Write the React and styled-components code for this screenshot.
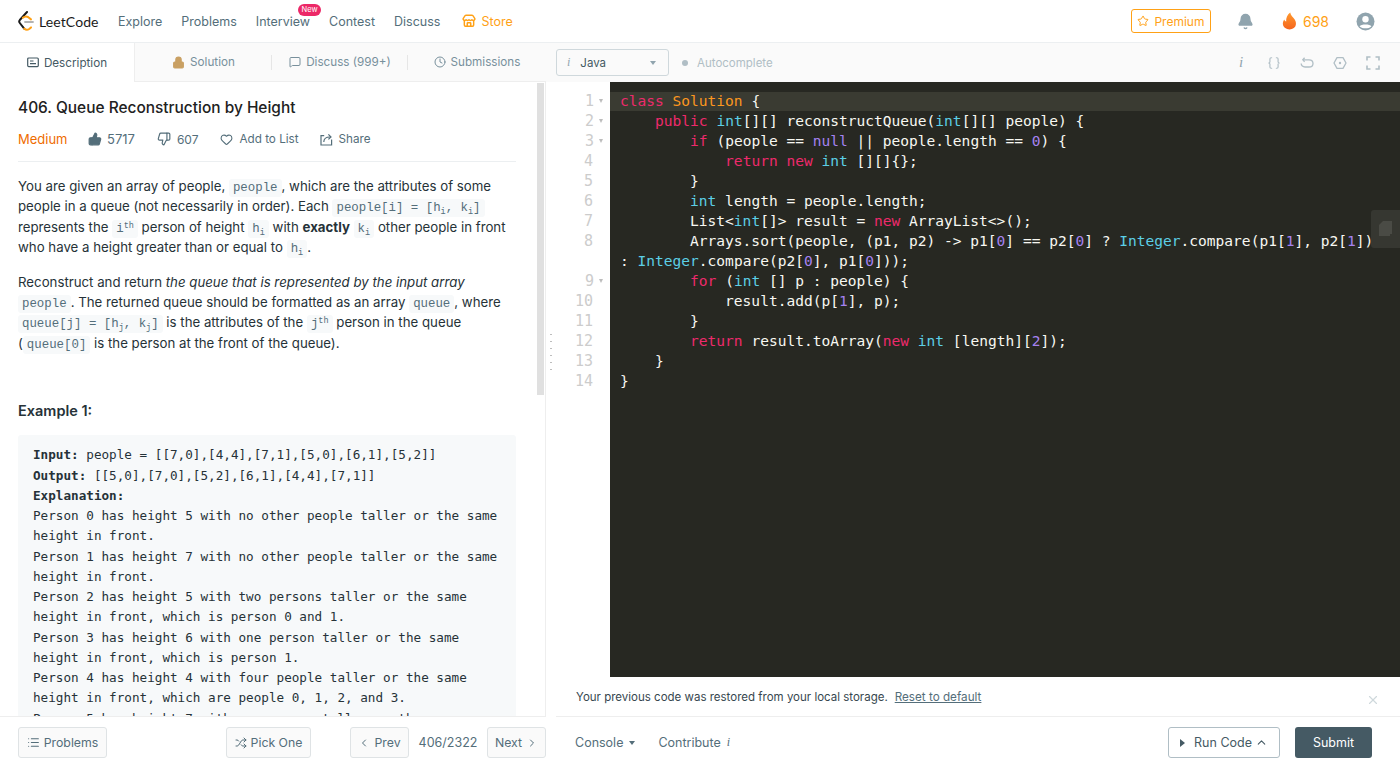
import React from "react"
import styled, { createGlobalStyle } from "styled-components"
import {
  Star,
  ThumbsUp,
  ThumbsDown,
  Heart,
  MessageSquare,
  Clock,
  Lock,
  List,
  Shuffle,
  ChevronLeft,
  ChevronRight,
  ChevronUp,
  Braces,
  Store,
  Bell,
  X,
} from "lucide-react"

const GlobalStyle = createGlobalStyle`
  html, body {
    margin: 0;
    padding: 0;
    height: 100%;
    overflow: hidden;
    background: #fff;
    font-family: Inter, "Noto Sans", sans-serif;
    color: #263238;
  }
  * { box-sizing: border-box; }
`

const Page = styled.div`
  width: 1400px;
  height: 768px;
  display: flex;
  flex-direction: column;
  position: relative;
`

/* top navigation */
const Header = styled.header`
  height: 43px;
  flex: none;
  display: flex;
  align-items: center;
  padding: 0 25px 0 18px;
  border-bottom: 1px solid #eceff1;
`

const LogoLink = styled.div`
  display: flex;
  align-items: center;
  gap: 5px;
  width: 100px;
  font-family: Lato, sans-serif;
  font-size: 14px;
  letter-spacing: 0.1px;
  color: #1a1a1a;
`

const Nav = styled.nav`
  display: flex;
  align-items: center;
  gap: 19px;
`

const NavItem = styled.a`
  position: relative;
  display: flex;
  align-items: center;
  gap: 5px;
  font-size: 12.5px;
  margin-left: ${(p) => (p.$accent ? 3 : 0)}px;
  color: ${(p) => (p.$accent ? "#ffa116" : "#546e7a")};
`

const NewBadge = styled.span`
  position: absolute;
  top: -10px;
  right: -11px;
  width: 23px;
  height: 12px;
  border-radius: 6px;
  background: #ec2867;
  color: #fff;
  font-size: 7.5px;
  line-height: 12px;
  text-align: center;
`

const HeaderRight = styled.div`
  margin-left: auto;
  display: flex;
  align-items: center;
`

const PremiumButton = styled.button`
  width: 80px;
  height: 24px;
  padding: 0;
  display: flex;
  align-items: center;
  justify-content: center;
  gap: 5px;
  background: #fff;
  border: 1px solid #ffa116;
  border-radius: 3px;
  color: #ffa116;
  font: 12px Inter, sans-serif;
  margin-right: 26px;
`

const Coins = styled.div`
  display: flex;
  align-items: center;
  gap: 6px;
  margin: 0 27px 0 28px;
  font-size: 14px;
  color: #ffa116;
`

/* the two columns */
const Main = styled.div`
  flex: 1;
  min-height: 0;
  display: flex;
`

const LeftColumn = styled.section`
  width: 546px;
  flex: none;
  display: flex;
  flex-direction: column;
  position: relative;
`

const Tabs = styled.div`
  height: 39px;
  flex: none;
  display: grid;
  grid-template-columns: 135px 137px 136px 138px;
  background: #fafafa;
`

const Tab = styled.div`
  display: flex;
  align-items: center;
  justify-content: center;
  gap: 5px;
  font-size: 11.7px;
  color: ${(p) => (p.$active ? "#455a64" : "#78909c")};
  background: ${(p) => (p.$active ? "#fff" : "transparent")};
  border-bottom: ${(p) => (p.$active ? "none" : "1px solid #eeeeee")};
  border-right: ${(p) => (p.$active ? "1px solid #eeeeee" : "none")};
`

const Separated = styled(Tab)`
  position: relative;
  &::after {
    content: "";
    position: absolute;
    right: 0;
    top: 12px;
    height: 15px;
    width: 1px;
    background: #e6e6e6;
  }
`

const Description = styled.div`
  flex: 1;
  min-height: 0;
  overflow: hidden;
  padding: 16px 29px 0 18px;
  border-right: 1px solid #eeeeee;
  border-bottom: 1px solid #eeeeee;
`

const Title = styled.h1`
  margin: 0;
  font-size: 15.45px;
  line-height: 20px;
  font-weight: 500;
  color: #212121;
`

const Meta = styled.div`
  display: flex;
  align-items: center;
  height: 20px;
  margin-top: 11px;
  color: #546e7a;
`

const Difficulty = styled.span`
  color: #ef6c00;
  font-size: 13px;
  width: 70px;
  flex: none;
`

const MetaItem = styled.span`
  display: flex;
  align-items: center;
  gap: ${(p) => p.$inner || 6}px;
  font-size: ${(p) => p.$size || 11.7}px;
  margin-right: ${(p) => p.$gap || 0}px;
`

const Rule = styled.hr`
  margin: 12px 0 14px;
  border: 0;
  border-top: 1px solid #eceff1;
`

const Para = styled.p`
  margin: 0 0 14px;
  font-size: 13.25px;
  line-height: 20.4px;
  color: #263238;
`

const Code = styled.code`
  font-family: "Liberation Mono", monospace;
  font-size: 12.4px;
  line-height: 1;
  color: #546e7a;
  background: #f7f9fa;
  border-radius: 3px;
  padding: 2px 4px;
  sub, sup {
    font-size: 8.5px;
    line-height: 0;
    vertical-align: baseline;
    position: relative;
  }
  sub { top: 3px; }
  sup { top: -4px; }
`

const ExampleTitle = styled.div`
  margin-top: 48px;
  font-size: 14.5px;
  line-height: 20px;
  font-weight: 600;
  color: #263238;
`

const ExampleBlock = styled.pre`
  margin: 14px 0 0;
  padding: 10px 15px;
  background: #f7f9fa;
  border-radius: 3px;
  font-family: "DejaVu Sans Mono", monospace;
  font-size: 12.65px;
  line-height: 20.25px;
  color: #263238;
  b { font-weight: 700; }
`

const ScrollThumb = styled.div`
  position: absolute;
  top: 40px;
  left: 537px;
  width: 7px;
  height: 312px;
  background: #e0e0e0;
`

const Footer = styled.footer`
  height: 51px;
  flex: none;
  display: flex;
  align-items: center;
`

const LeftFooter = styled(Footer)`
  padding: 0 0 0 18px;
`

const PagerButton = styled.button`
  height: 31px;
  padding: 0;
  width: ${(p) => p.$w}px;
  margin-left: ${(p) => p.$ml || 0}px;
  display: flex;
  align-items: center;
  justify-content: center;
  gap: 4px;
  font: 12.3px Inter, sans-serif;
  color: #546e7a;
  background: #fafafa;
  border: 1px solid #dfe3e5;
  border-radius: 3px;
`

const PageCount = styled.span`
  width: 78px;
  text-align: center;
  font-size: 12.5px;
  color: #546e7a;
`

const RightColumn = styled.section`
  flex: 1;
  min-width: 0;
  padding-left: 10px;
  display: flex;
  flex-direction: column;
  position: relative;
`

const ResizeDots = styled.div`
  position: absolute;
  left: 4px;
  top: 288px;
  width: 2px;
  height: 42px;
  background-image: radial-gradient(circle, #bdbdbd 1px, transparent 1px);
  background-size: 2px 7px;
`

const EditorBar = styled.div`
  height: 39px;
  flex: none;
  display: flex;
  align-items: center;
  background: #fafafa;
  margin-left: -10px;
  padding-left: 10px;
`

const LangSelect = styled.div`
  width: 113px;
  height: 27px;
  display: flex;
  align-items: center;
  padding: 0 12px 0 10px;
  background: #fafafa;
  border: 1px solid #cfd8dc;
  border-radius: 3px;
  font-size: 11.5px;
  color: #455a64;
`

const InfoMark = styled.i`
  font-family: "Liberation Serif", serif;
  font-size: ${(p) => p.$size || 12}px;
  color: ${(p) => p.$color || "#90a4ae"};
`

const BarInfo = styled(InfoMark)`
  width: 14px;
  text-align: center;
`

const LangName = styled.span`
  margin-left: 10px;
  flex: 1;
`

const Caret = styled.span`
  width: 0;
  height: 0;
  border-left: 3.5px solid transparent;
  border-right: 3.5px solid transparent;
  border-top: 4px solid ${(p) => p.$color || "#90a4ae"};
`

const Toggle = styled.div`
  display: flex;
  align-items: center;
  gap: 9px;
  margin-left: 13px;
  font-size: 11.5px;
  color: #b0bec5;
  &::before {
    content: "";
    width: 6px;
    height: 6px;
    border-radius: 50%;
    background: #b0bec5;
  }
`

const BarIcons = styled.div`
  margin-left: auto;
  padding-right: 20px;
  display: flex;
  align-items: center;
  gap: 19px;
  color: #b0bec5;
`

const Editor = styled.div`
  height: 595px;
  flex: none;
  display: flex;
  position: relative;
`

const Gutter = styled.div`
  width: 54px;
  flex: none;
  padding-top: 9px;
  background: #fff;
`

const GutterLine = styled.div`
  height: ${(p) => (p.$tall ? 40 : 20)}px;
  display: flex;
  justify-content: flex-end;
  padding-right: ${(p) => (p.$fold ? 7 : 17)}px;
  gap: 5px;
  font-family: "DejaVu Sans Mono", monospace;
  font-size: 15px;
  line-height: 20px;
  color: #cccccc;
`

const FoldMark = styled.span`
  margin-top: 8px;
  width: 0;
  height: 0;
  border-left: 2.5px solid transparent;
  border-right: 2.5px solid transparent;
  border-top: 4px solid #bdbdbd;
`

const CodePane = styled.pre`
  flex: 1;
  margin: 0;
  padding: 9px 0 0 10px;
  background: #272822;
  font-family: "DejaVu Sans Mono", monospace;
  font-size: 14.55px;
  line-height: 20px;
  color: #f8f8f2;
  position: relative;
  overflow: hidden;
`

const ActiveLine = styled.div`
  position: absolute;
  left: 0;
  right: 0;
  top: 10px;
  height: 19px;
  background: #3a3b32;
`

const CodeText = styled.div`
  position: relative;
`

const Tok = styled.span`
  color: ${(p) => ({ kw: "#ee2a6c", ty: "#5ccfe6", cl: "#fd971f", num: "#a582f0" }[p.$k])};
`

const CopyTab = styled.div`
  position: absolute;
  right: 0;
  top: 128px;
  width: 29px;
  height: 38px;
  display: flex;
  align-items: center;
  justify-content: center;
  background: #363731;
  border-radius: 3px 0 0 3px;
  color: #4a4b45;
`

const Notice = styled.div`
  height: 40px;
  flex: none;
  display: flex;
  align-items: center;
  padding: 0 20px;
  font-size: 11.5px;
  color: #37474f;
  border-bottom: 1px solid #eeeeee;
  gap: 7px;
`

const NoticeLink = styled.a`
  color: #546e7a;
  font-size: 11.7px;
  text-decoration: underline;
`

const NoticeClose = styled.span`
  margin-left: auto;
  padding-top: 6px;
  color: #cfd8dc;
  display: flex;
`

const RightFooter = styled(Footer)`
  padding: 0 28px 0 19px;
`

const ConsoleLink = styled.span`
  display: flex;
  align-items: center;
  gap: 6px;
  font-size: 12.5px;
  color: #546e7a;
  margin-right: ${(p) => p.$gap || 0}px;
`

const RunButton = styled.button`
  margin-left: auto;
  width: 112px;
  height: 31px;
  padding: 0;
  display: flex;
  align-items: center;
  justify-content: center;
  gap: 3px;
  background: #fff;
  border: 1px solid #b0bec5;
  border-radius: 3px;
  font: 12.5px Inter, sans-serif;
  color: #455a64;
`

const PlayMark = styled.span`
  width: 0;
  height: 0;
  margin-right: 6px;
  border-top: 4px solid transparent;
  border-bottom: 4px solid transparent;
  border-left: 5px solid #455a64;
`

const SubmitButton = styled.button`
  margin-left: 15px;
  width: 77px;
  height: 31px;
  padding: 0;
  border: 0;
  border-radius: 3px;
  background: #455a64;
  color: #fff;
  font: 12.5px Inter, sans-serif;
`

const Logo = () => (
  <svg width="16" height="21" viewBox="0 0 16 21" fill="none" strokeLinecap="round" strokeLinejoin="round">
    <path d="M9 1 L1.8 9 Q0.6 10.5 1.8 12 L6.2 17.6" stroke="#1a1a1a" strokeWidth="2" />
    <path d="M6.2 17.6 Q8.6 19.8 11.2 18 L13 16.4" stroke="#ffa116" strokeWidth="2" />
    <path d="M4.8 6.8 Q7.4 4.6 10 6 L13 8.4" stroke="#ffa116" strokeWidth="2" />
    <path d="M7 11 H15" stroke="#b3b3b3" strokeWidth="1.8" />
  </svg>
)

const Flame = () => (
  <svg width="15" height="18" viewBox="0 0 15 18">
    <defs>
      <linearGradient id="flame" x1="0" y1="0" x2="0" y2="1">
        <stop offset="0" stopColor="#ff9a2e" />
        <stop offset="1" stopColor="#f5641e" />
      </linearGradient>
    </defs>
    <path
      d="M8.2 0.5 C8.6 3.6 11 4.8 12.7 7.4 C14.6 10.4 14.4 14 11.8 16.1 C9.6 17.9 5.4 17.9 3.2 16.1 C0.4 13.8 0.2 10.4 2.2 7.4 C2.6 8.4 3.2 9.2 4.2 9.6 C3.8 6 5.4 2.6 8.2 0.5 Z"
      fill="url(#flame)"
    />
  </svg>
)

const Avatar = () => (
  <svg width="19" height="19" viewBox="0 0 19 19">
    <circle cx="9.5" cy="9.5" r="9" fill="#90a4ae" />
    <circle cx="9.5" cy="7.3" r="3.2" fill="#fff" />
    <path d="M3.6 14.4 C5 11.8 14 11.8 15.4 14.4 C12.5 17 6.5 17 3.6 14.4 Z" fill="#fff" />
  </svg>
)

const DescIcon = () => (
  <svg width="12" height="11" viewBox="0 0 12 11" fill="none" stroke="currentColor">
    <rect x="0.7" y="1" width="10.6" height="8.6" rx="1" strokeWidth="1.2" />
    <path d="M3 4 H6.5 M3 6.6 H9" strokeWidth="1.1" />
  </svg>
)

const ShareIcon = () => (
  <svg width="13" height="13" viewBox="0 0 13 13" fill="none" stroke="currentColor" strokeWidth="1.2">
    <path d="M4.2 2.6 H1 V12 H11.6 V6.4" />
    <path d="M3.8 9 C3.8 5.6 6 4 10 4" />
    <path d="M8.4 1.4 L11 4 L8.4 6.4" />
  </svg>
)

const UndoIcon = () => (
  <svg width="14" height="14" viewBox="0 0 14 14" fill="none" stroke="currentColor" strokeWidth="1.3">
    <path d="M3.2 3.8 H9 C11.4 3.8 13 5.4 13 7.4 C13 9.6 11.2 11 9 11 H5 C2.8 11 1.2 9.6 1.2 7.6" />
    <path d="M4.6 1.8 L2.8 3.8 L4.6 5.8" />
  </svg>
)

const GearIcon = () => (
  <svg width="14" height="14" viewBox="0 0 14 14" fill="none" stroke="currentColor" strokeWidth="1.3" strokeLinejoin="round">
    <path d="M4 1.6 H10 L13 7 L10 12.4 H4 L1 7 Z" />
    <circle cx="7" cy="7" r="1.2" fill="currentColor" stroke="none" />
  </svg>
)

const FullscreenIcon = () => (
  <svg width="14" height="14" viewBox="0 0 14 14" fill="none" stroke="currentColor" strokeWidth="1.6">
    <path d="M1 4.5 V1 H4.5 M9.5 1 H13 V4.5 M13 9.5 V13 H9.5 M4.5 13 H1 V9.5" />
  </svg>
)

const PageIcon = () => (
  <svg width="13" height="16" viewBox="0 0 13 16" fill="currentColor">
    <path d="M4 0 H13 V13 H11 V15 H0 V4 Z" />
  </svg>
)

const Description406 = () => (
  <Description>
    <Title>406. Queue Reconstruction by Height</Title>
    <Meta>
      <Difficulty>Medium</Difficulty>
      <MetaItem $gap={22} $size={13} $inner={5}>
        <ThumbsUp size={14} fill="#546e7a" stroke="#546e7a" />
        5717
      </MetaItem>
      <MetaItem $gap={22} $size={12}>
        <ThumbsDown size={14} />
        607
      </MetaItem>
      <MetaItem $gap={21}>
        <Heart size={13} />
        Add to List
      </MetaItem>
      <MetaItem>
        <ShareIcon />
        Share
      </MetaItem>
    </Meta>
    <Rule />
    <Para>
      You are given an array of people, <Code>people</Code>, which are the attributes of some people in a queue
      (not necessarily in order). Each <Code>people[i] = [h<sub>i</sub>, k<sub>i</sub>]</Code> represents the{" "}
      <Code>i<sup>th</sup></Code> person of height <Code>h<sub>i</sub></Code> with <b>exactly</b>{" "}
      <Code>k<sub>i</sub></Code> other people in front who have a height greater than or equal to{" "}
      <Code>h<sub>i</sub></Code>.
    </Para>
    <Para>
      Reconstruct and return <i>the queue that is represented by the input array</i> <Code>people</Code>. The
      returned queue should be formatted as an array <Code>queue</Code>, where{" "}
      <Code>queue[j] = [h<sub>j</sub>, k<sub>j</sub>]</Code> is the attributes of the <Code>j<sup>th</sup></Code>{" "}
      person in the queue (<Code>queue[0]</Code> is the person at the front of the queue).
    </Para>
    <ExampleTitle>Example 1:</ExampleTitle>
    <ExampleBlock>
      <b>Input:</b> people = [[7,0],[4,4],[7,1],[5,0],[6,1],[5,2]]{"\n"}
      <b>Output:</b> [[5,0],[7,0],[5,2],[6,1],[4,4],[7,1]]{"\n"}
      <b>Explanation:</b>{"\n"}
      {`Person 0 has height 5 with no other people taller or the same
height in front.
Person 1 has height 7 with no other people taller or the same
height in front.
Person 2 has height 5 with two persons taller or the same
height in front, which is person 0 and 1.
Person 3 has height 6 with one person taller or the same
height in front, which is person 1.
Person 4 has height 4 with four people taller or the same
height in front, which are people 0, 1, 2, and 3.
Person 5 has height 7 with one person taller or the same`}
    </ExampleBlock>
  </Description>
)

const foldLines = [1, 2, 3, 9]
const lineNumbers = [1, 2, 3, 4, 5, 6, 7, 8, 9, 10, 11, 12, 13, 14]

const CodeBody = () => (
  <CodeText>
    <Tok $k="kw">class</Tok> <Tok $k="cl">Solution</Tok> {"{\n"}
    {"    "}<Tok $k="kw">public</Tok> <Tok $k="ty">int</Tok>{"[][] reconstructQueue("}<Tok $k="ty">int</Tok>{"[][] people) {\n"}
    {"        "}<Tok $k="kw">if</Tok> {"(people == "}<Tok $k="num">null</Tok>{" || people.length == "}<Tok $k="num">0</Tok>{") {\n"}
    {"            "}<Tok $k="kw">return</Tok> <Tok $k="kw">new</Tok> <Tok $k="ty">int</Tok>{" [][]{};\n"}
    {"        }\n"}
    {"        "}<Tok $k="ty">int</Tok>{" length = people.length;\n"}
    {"        List<"}<Tok $k="ty">int</Tok>{"[]> result = "}<Tok $k="kw">new</Tok>{" ArrayList<>();\n"}
    {"        Arrays.sort(people, (p1, p2) -> p1["}<Tok $k="num">0</Tok>{"] == p2["}<Tok $k="num">0</Tok>{"] ? "}<Tok $k="ty">Integer</Tok>{".compare(p1["}<Tok $k="num">1</Tok>{"], p2["}<Tok $k="num">1</Tok>{"])\n"}
    {": "}<Tok $k="ty">Integer</Tok>{".compare(p2["}<Tok $k="num">0</Tok>{"], p1["}<Tok $k="num">0</Tok>{"]));\n"}
    {"        "}<Tok $k="kw">for</Tok> {"("}<Tok $k="ty">int</Tok>{" [] p : people) {\n"}
    {"            result.add(p["}<Tok $k="num">1</Tok>{"], p);\n"}
    {"        }\n"}
    {"        "}<Tok $k="kw">return</Tok>{" result.toArray("}<Tok $k="kw">new</Tok> <Tok $k="ty">int</Tok>{" [length]["}<Tok $k="num">2</Tok>{"]);\n"}
    {"    }\n"}
    {"}"}
  </CodeText>
)

export default function App() {
  return (
    <Page>
      <GlobalStyle />
      <Header>
        <LogoLink>
          <Logo />
          LeetCode
        </LogoLink>
        <Nav>
          <NavItem>Explore</NavItem>
          <NavItem>Problems</NavItem>
          <NavItem>
            Interview
            <NewBadge>New</NewBadge>
          </NavItem>
          <NavItem>Contest</NavItem>
          <NavItem>Discuss</NavItem>
          <NavItem $accent>
            <Store size={14} strokeWidth={2.5} />
            Store
          </NavItem>
        </Nav>
        <HeaderRight>
          <PremiumButton>
            <Star size={12} />
            Premium
          </PremiumButton>
          <Bell size={17} fill="#90a4ae" stroke="#90a4ae" />
          <Coins>
            <Flame />
            698
          </Coins>
          <Avatar />
        </HeaderRight>
      </Header>
      <Main>
        <LeftColumn>
          <Tabs>
            <Tab $active>
              <DescIcon />
              Description
            </Tab>
            <Separated>
              <Lock size={13} fill="#c9a063" stroke="#c9a063" />
              Solution
            </Separated>
            <Separated>
              <MessageSquare size={12} />
              Discuss (999+)
            </Separated>
            <Tab>
              <Clock size={12} />
              Submissions
            </Tab>
          </Tabs>
          <Description406 />
          <ScrollThumb />
          <LeftFooter>
            <PagerButton $w={89}>
              <List size={13} />
              Problems
            </PagerButton>
            <PagerButton $w={85} $ml={119}>
              <Shuffle size={12} />
              Pick One
            </PagerButton>
            <PagerButton $w={59} $ml={39}>
              <ChevronLeft size={12} />
              Prev
            </PagerButton>
            <PageCount>406/2322</PageCount>
            <PagerButton $w={59}>
              Next
              <ChevronRight size={12} />
            </PagerButton>
          </LeftFooter>
        </LeftColumn>
        <RightColumn>
          <ResizeDots />
          <EditorBar>
            <LangSelect>
              <InfoMark>i</InfoMark>
              <LangName>Java</LangName>
              <Caret />
            </LangSelect>
            <Toggle>Autocomplete</Toggle>
            <BarIcons>
              <BarInfo $size={15}>i</BarInfo>
              <Braces size={14} />
              <UndoIcon />
              <GearIcon />
              <FullscreenIcon />
            </BarIcons>
          </EditorBar>
          <Editor>
            <Gutter>
              {lineNumbers.map((n) => (
                <GutterLine key={n} $tall={n === 8} $fold={foldLines.includes(n)}>
                  {n}
                  {foldLines.includes(n) && <FoldMark />}
                </GutterLine>
              ))}
            </Gutter>
            <CodePane>
              <ActiveLine />
              <CodeBody />
            </CodePane>
            <CopyTab>
              <PageIcon />
            </CopyTab>
          </Editor>
          <Notice>
            Your previous code was restored from your local storage.
            <NoticeLink>Reset to default</NoticeLink>
            <NoticeClose>
              <X size={14} />
            </NoticeClose>
          </Notice>
          <RightFooter>
            <ConsoleLink $gap={23}>
              Console
              <Caret $color="#546e7a" />
            </ConsoleLink>
            <ConsoleLink>
              Contribute
              <InfoMark $color="#546e7a">i</InfoMark>
            </ConsoleLink>
            <RunButton>
              <PlayMark />
              Run Code
              <ChevronUp size={13} />
            </RunButton>
            <SubmitButton>Submit</SubmitButton>
          </RightFooter>
        </RightColumn>
      </Main>
    </Page>
  )
}
